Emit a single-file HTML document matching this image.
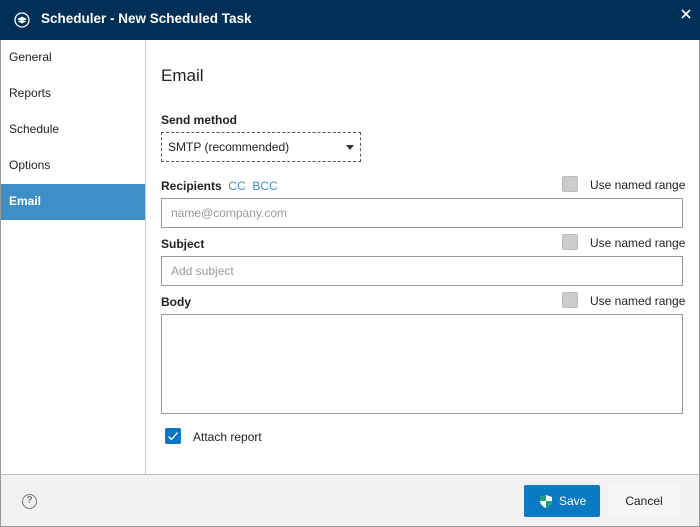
<!DOCTYPE html>
<html><head><style>
*{margin:0;padding:0;box-sizing:border-box}
body{width:700px;height:527px;position:relative;font-family:"Segoe UI","Liberation Sans",sans-serif;font-size:12px;color:#222;background:#fff;overflow:hidden}
.abs{position:absolute}
.tb{left:0;top:0;width:700px;height:40px;background:#003057;color:#fff}
.nav{left:0;top:40px;width:146px;height:434px;border-right:1px solid #ccc;border-left:1px solid #999}
.nav div{height:36px;line-height:34px;padding-left:8px;font-size:12px}
.lbl{font-weight:bold;font-size:12px}
.inp{border:1px solid #999;height:30px;left:161px;width:522px;color:#999;padding-left:9px;line-height:28px}
.cb{width:16px;height:16px;background:#ccc;border:1px solid #bbb;border-radius:2px}
.unr{font-size:12px}
.foot{left:0;top:474px;width:700px;height:53px;background:#f2f2f2;border-top:1px solid #bbb;border-left:1px solid #999;border-right:1px solid #999;border-bottom:1px solid #999}
</style></head><body>
<div class="abs tb">
 <svg class="abs" style="left:14px;top:12px" width="16" height="16" viewBox="0 0 16 16"><circle cx="8" cy="8" r="7" fill="none" stroke="#fff" stroke-width="1.3"/><path d="M4 7l4-2 4 2-4 2z M4 9l4 2 4-2" fill="#fff" stroke="#fff" stroke-width="0.8"/></svg>
 <div class="abs" style="left:41px;top:11px;font-size:13.5px;font-weight:bold">Scheduler - New Scheduled Task</div>
 <svg class="abs" style="left:681px;top:9px" width="10" height="10"><path d="M1 1L9 9M9 1L1 9" stroke="#fff" stroke-width="1.6"/></svg>
</div>
<div class="abs" style="left:699px;top:40px;width:1px;height:434px;background:#999"></div>
<div class="abs nav">
 <div>General</div><div>Reports</div><div>Schedule</div><div>Options</div>
 <div style="background:#3e8ec8;color:#fff;font-weight:bold">Email</div>
</div>
<div class="abs" style="left:161px;top:66px;font-size:17px">Email</div>
<div class="abs lbl" style="left:161px;top:113px">Send method</div>
<div class="abs" style="left:161px;top:132px;width:200px;height:30px;border:1px dashed #555;line-height:28px;padding-left:6px">SMTP (recommended)<span class="abs" style="right:6px;top:12px;border:4px solid transparent;border-top:5px solid #333;border-bottom:0"></span></div>
<div class="abs lbl" style="left:161px;top:179px">Recipients <span style="font-weight:normal;color:#3e8ec8">&nbsp;CC &nbsp;BCC</span></div>
<div class="abs cb" style="left:562px;top:176px"></div><div class="abs unr" style="left:590px;top:178px">Use named range</div>
<div class="abs inp" style="top:198px">name@company.com</div>
<div class="abs lbl" style="left:161px;top:237px">Subject</div>
<div class="abs cb" style="left:562px;top:234px"></div><div class="abs unr" style="left:590px;top:236px">Use named range</div>
<div class="abs inp" style="top:256px">Add subject</div>
<div class="abs lbl" style="left:161px;top:295px">Body</div>
<div class="abs cb" style="left:562px;top:292px"></div><div class="abs unr" style="left:590px;top:294px">Use named range</div>
<div class="abs inp" style="top:314px;height:100px"></div>
<div class="abs" style="left:165px;top:428px;width:16px;height:16px;background:#0a78c6;border-radius:2px"><svg width="16" height="16"><path d="M3.5 8.5l3 3 6-7" fill="none" stroke="#fff" stroke-width="1.3"/></svg></div>
<div class="abs" style="left:193px;top:430px">Attach report</div>
<div class="abs foot">
 <div class="abs" style="left:21px;top:19px;width:15px;height:15px;border:1.5px solid #777;border-radius:50%;font-size:10px;line-height:12px;text-align:center;color:#777;font-weight:bold">?</div>
 <div class="abs" style="left:523px;top:10px;width:76px;height:32px;background:#0a7ac4;color:#fff;border-radius:2px">
  <svg class="abs" style="left:16px;top:10px" width="12" height="13" viewBox="0 0 12 13"><path d="M6 0L0 2v4c0 3 3 6 6 7 3-1 6-4 6-7V2z" fill="#fff"/><path d="M6 0L0 2v4h6z M6 6v7c3-1 6-4 6-7z" fill="#1aa37a"/></svg>
  <span class="abs" style="left:35px;top:9px">Save</span></div>
 <div class="abs" style="left:607px;top:10px;width:72px;height:32px;background:#f7f7f7;text-align:center;line-height:33px">Cancel</div>
</div>
</body></html>
